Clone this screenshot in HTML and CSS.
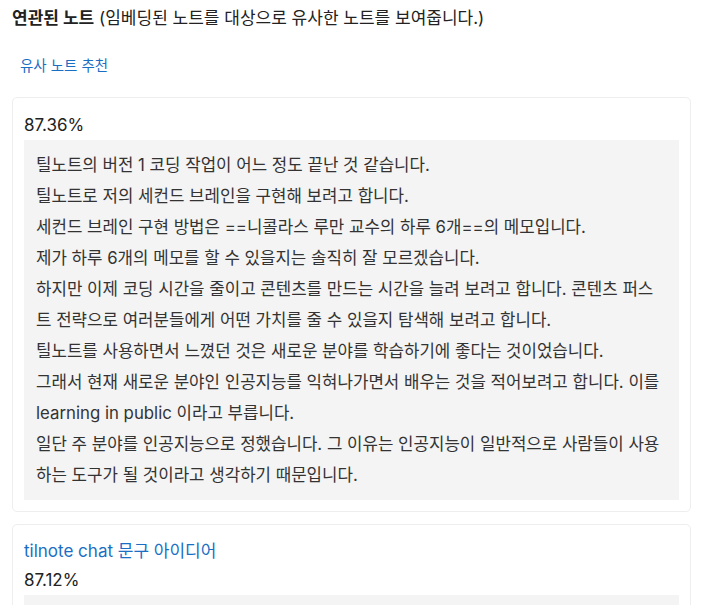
FILE: index.html
```html
<!DOCTYPE html>
<html lang="ko">
<head>
<meta charset="utf-8">
<link rel="stylesheet" href="styles.css">
</head>
<body>
<div class="page">
  <h2 class="heading"><strong>연관된 노트</strong> (임베딩된 노트를 대상으로 유사한 노트를 보여줍니다.)</h2>
  <div class="tabs"><a class="tab-link" href="#">유사 노트 추천</a></div>
  <div class="card">
    <div class="score">87.36%</div>
    <div class="excerpt">
      <p>틸노트의 버전 1 코딩 작업이 어느 정도 끝난 것 같습니다.</p>
      <p>틸노트로 저의 세컨드 브레인을 구현해 보려고 합니다.</p>
      <p>세컨드 브레인 구현 방법은 ==니콜라스 루만 교수의 하루 6개==의 메모입니다.</p>
      <p>제가 하루 6개의 메모를 할 수 있을지는 솔직히 잘 모르겠습니다.</p>
      <p>하지만 이제 코딩 시간을 줄이고 콘텐츠를 만드는 시간을 늘려 보려고 합니다. 콘텐츠 퍼스트 전략으로 여러분들에게 어떤 가치를 줄 수 있을지 탐색해 보려고 합니다.</p>
      <p>틸노트를 사용하면서 느꼈던 것은 새로운 분야를 학습하기에 좋다는 것이었습니다.</p>
      <p>그래서 현재 새로운 분야인 인공지능를 익혀나가면서 배우는 것을 적어보려고 합니다. 이를 learning in public 이라고 부릅니다.</p>
      <p>일단 주 분야를 인공지능으로 정했습니다. 그 이유는 인공지능이 일반적으로 사람들이 사용하는 도구가 될 것이라고 생각하기 때문입니다.</p>
    </div>
  </div>
  <div class="card">
    <a class="card-title" href="#">tilnote chat 문구 아이디어</a>
    <div class="score">87.12%</div>
    <div class="excerpt">
      <p>틸노트 채팅 기능에 들어갈 문구 아이디어를 정리합니다.</p>
      <p>질문을 입력하면 노트를 바탕으로 답변을 만들어 줍니다.</p>
    </div>
  </div>
</div>
</body>
</html>
```

FILE: styles.css
```css
* { box-sizing: border-box; }
html, body { margin: 0; padding: 0; background: #ffffff; }
body {
  font-family: Inter, "Noto Sans CJK KR", "Noto Sans", sans-serif;
  color: #222222;
  font-size: 16px;
}
.page {
  padding: 6px 29px 0 12px;
  height: 605px;
  overflow: hidden;
}
.heading {
  margin: 0;
  font-size: 17px;
  font-weight: 400;
  line-height: 24px;
  color: #222222;
}
.heading strong { font-weight: 700; }
.tabs {
  padding: 25px 8px 0;
  height: 67px;
}
.tab-link {
  font-size: 14.5px;
  line-height: 22px;
  color: #1a6fc4;
  text-decoration: none;
}
.card {
  border: 1px solid #eeeeee;
  border-radius: 5px;
  padding: 15px 11px 11px;
  margin-bottom: 12px;
}
.score {
  font-size: 17px;
  line-height: 24px;
  color: #222222;
  margin-bottom: 3px;
}
.card-title {
  display: block;
  font-size: 17px;
  line-height: 22px;
  color: #1a6fc4;
  text-decoration: none;
  margin-bottom: 6px;
}
.excerpt {
  background: #f4f4f4;
  padding: 10px 12px 9px;
  color: #333333;
  font-size: 16.8px;
  line-height: 31px;
}
.excerpt p { margin: 0; }
```
